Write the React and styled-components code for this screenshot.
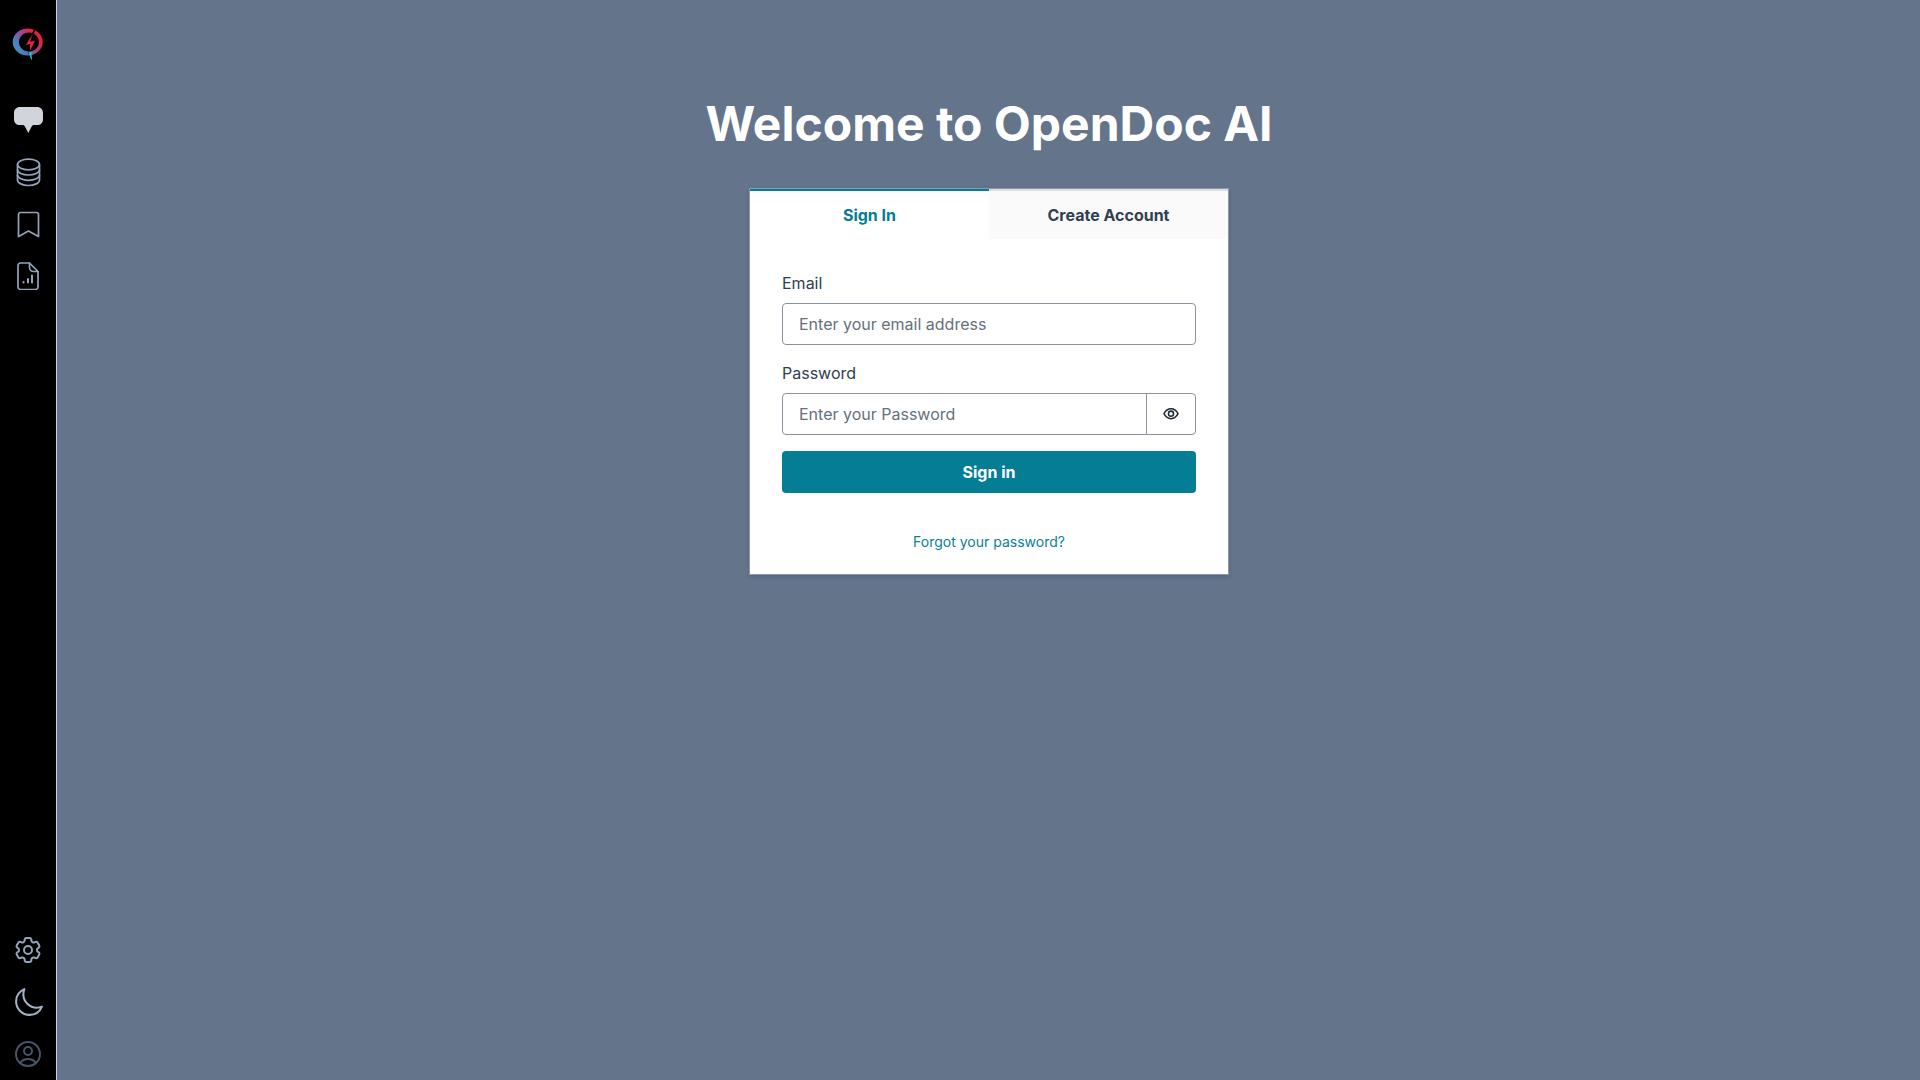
import styled, { createGlobalStyle } from "styled-components";
import { HiOutlineCog6Tooth, HiOutlineMoon, HiOutlineUserCircle } from "react-icons/hi2";

const GlobalStyle = createGlobalStyle`
  html, body {
    margin: 0;
    padding: 0;
    height: 100%;
    font-family: Inter, "Liberation Sans", sans-serif;
    background: #64748b;
  }
  * { box-sizing: border-box; }
`;

const Logo = () => (
  <svg width="34" height="40" viewBox="0 0 34 40" fill="none">
    <defs>
      <linearGradient id="ring" x1="0" y1="0.9" x2="1" y2="0.2">
        <stop offset="0" stopColor="#2aa5c8" />
        <stop offset="0.35" stopColor="#5c6fb8" />
        <stop offset="0.6" stopColor="#b03a80" />
        <stop offset="0.8" stopColor="#e0263f" />
        <stop offset="1" stopColor="#e0262f" />
      </linearGradient>
    </defs>
    <path
      fillRule="evenodd"
      fill="url(#ring)"
      d="M16.7 5.5c8.3 0 15 6 15 13.5s-6.700 13.500-15 13.500-15-6-15-13.500 6.700-13.500 15-13.500zM18 9.500c-5.500 0-10 4.200-10 9.500s4.500 9.500 10 9.500 10-4.200 10-9.500-4.500-9.500-10-9.500z"
    />
    <path d="M23.500 7 L13.500 23 L18.500 21.500 L18 31 L25 17 L20 18 Z" fill="#e8243f" stroke="#000" strokeWidth="1.200" />
    <path d="M18 29 L20.500 36.500 L20 29 Z" fill="#25c7c2" stroke="#25c7c2" strokeWidth="0.700" />
  </svg>
);

const ChatIcon = () => (
  <svg width="29" height="26" viewBox="0 0 29 26">
    <path
      d="M6 0h17c3.500 0 6 2.500 6 6v6.500c0 3.500-2.500 5.500-6 5.500h-3c-1 0-1.500.500-2.200 1.300L14.300 26l-3.500-6.700c-.700-.800-1.200-1.300-2.200-1.300H6c-3.500 0-6-2-6-5.500V6c0-3.500 2.500-6 6-6z"
      fill="#d1d5db"
    />
  </svg>
);

const DatabaseIcon = () => (
  <svg width="25" height="29" viewBox="0 0 25 29" fill="none" stroke="currentColor" strokeWidth="1.700">
    <ellipse cx="12.500" cy="6.500" rx="11" ry="5.300" />
    <path d="M1.500 6.500v15.500c0 3 5 5.500 11 5.500s11-2.500 11-5.500V6.500" />
    <path d="M1.500 11.700c0 3 5 5.300 11 5.300s11-2.300 11-5.300" />
    <path d="M1.500 17c0 3 5 5.300 11 5.300s11-2.300 11-5.300" />
  </svg>
);

const BookmarkIcon = () => (
  <svg width="23" height="27" viewBox="0 0 23 27" fill="none" stroke="currentColor" strokeWidth="1.700" strokeLinejoin="round">
    <path d="M3.500 1.500h16a2 2 0 0 1 2 2v22l-10-5.500-10 5.500v-22a2 2 0 0 1 2-2z" />
  </svg>
);

const ReportIcon = () => (
  <svg width="22" height="28" viewBox="0 0 22 28" fill="none" stroke="currentColor" strokeWidth="1.700" strokeLinecap="round" strokeLinejoin="round">
    <path d="M3.500 1h9L21 9.500V25a2.500 2.500 0 0 1-2.500 2.500h-15A2.500 2.500 0 0 1 1 25V3.500A2.500 2.500 0 0 1 3.500 1z" />
    <path d="M12.500 1v4.500a4 4 0 0 0 4 4H21" />
    <path d="M6.500 20.500v-.5M11 20.500v-3.500M15 20.500v-7" strokeWidth="2" />
  </svg>
);

const EyeIcon = () => (
  <svg width="16" height="16" viewBox="0 0 24 24" fill="none" stroke="#1f2937" strokeWidth="2.300">
    <path d="M1.500 11.500C4 6.500 7.500 4 12 4s8 2.500 10.500 7.500C20 16.500 16.500 19 12 19s-8-2.500-10.500-7.500z" />
    <circle cx="12" cy="11.500" r="3.800" />
  </svg>
);

export default function App() {
  return (
    <>
      <GlobalStyle />
      <Page>
        <Sidebar>
          <NavGroup>
            <LogoSlot>
              <Logo />
            </LogoSlot>
            <NavItem>
              <ChatIcon />
            </NavItem>
            <NavItem>
              <DatabaseIcon />
            </NavItem>
            <NavItem>
              <BookmarkIcon />
            </NavItem>
            <NavItem>
              <ReportIcon />
            </NavItem>
          </NavGroup>
          <NavGroup>
            <NavItem>
              <HiOutlineCog6Tooth size={32} />
            </NavItem>
            <NavItem $soft>
              <HiOutlineMoon size={33} />
            </NavItem>
            <NavItem $dim>
              <HiOutlineUserCircle size={32} />
            </NavItem>
          </NavGroup>
        </Sidebar>
        <Main>
          <Title>Welcome to OpenDoc AI</Title>
          <Card>
            <Tabs>
              <Tab $active>Sign In</Tab>
              <Tab>Create Account</Tab>
            </Tabs>
            <Form onSubmit={(e) => e.preventDefault()}>
              <Field>
                <Label htmlFor="email">Email</Label>
                <Input id="email" type="email" placeholder="Enter your email address" />
              </Field>
              <Field>
                <Label htmlFor="password">Password</Label>
                <InputRow>
                  <PasswordInput id="password" type="password" placeholder="Enter your Password" />
                  <EyeButton type="button" aria-label="Show password">
                    <EyeIcon />
                  </EyeButton>
                </InputRow>
              </Field>
              <SubmitButton type="submit">Sign in</SubmitButton>
            </Form>
            <CardFooter>
              <ForgotLink type="button">Forgot your password?</ForgotLink>
            </CardFooter>
          </Card>
        </Main>
      </Page>
    </>
  );
}

const Page = styled.div`
  display: flex;
  height: 1080px;
  overflow: hidden;
  background: #64748b;
`;

const Sidebar = styled.nav`
  width: 57px;
  flex-shrink: 0;
  background: #000;
  border-right: 1px solid #cbd5e1;
  display: flex;
  flex-direction: column;
  justify-content: space-between;
  padding-top: 17px;
`;

const NavGroup = styled.div`
  display: flex;
  flex-direction: column;
`;

const NavItem = styled.div`
  height: 52px;
  display: flex;
  align-items: center;
  justify-content: center;
  color: ${(props) => (props.$dim ? "#475569" : props.$soft ? "#a3b1c4" : "#94a3b8")};
`;

const LogoSlot = styled(NavItem)`
  margin-bottom: 25px;
`;

const Main = styled.main`
  flex: 1;
  display: flex;
  flex-direction: column;
  align-items: center;
  padding: 95px 0 0 1px;
`;

const Title = styled.h1`
  margin: 0 0 35px;
  font-size: 48px;
  line-height: 58px;
  font-weight: 700;
  color: #fff;
`;

const Card = styled.div`
  width: 480px;
  background: #fff;
  border: 1px solid #8c99ab;
  box-shadow: 0 2px 4px rgba(13, 26, 38, 0.15);
`;

const Tabs = styled.div`
  display: grid;
  grid-template-columns: 1fr 1fr;
`;

const Tab = styled.button`
  height: 50px;
  border: 0;
  border-top: 2px solid ${(props) => (props.$active ? "#047d95" : "#dcdee0")};
  background: ${(props) => (props.$active ? "#fff" : "#fafafa")};
  color: ${(props) => (props.$active ? "#047d95" : "#304050")};
  font-family: inherit;
  font-size: 16px;
  font-weight: 700;
  padding: 0;
`;

const Form = styled.form`
  display: flex;
  flex-direction: column;
  gap: 16px;
  padding: 32px 32px 0;
`;

const Field = styled.div`
  display: flex;
  flex-direction: column;
  gap: 8px;
`;

const Label = styled.label`
  font-size: 16px;
  line-height: 24px;
  color: #304050;
`;

const Input = styled.input`
  height: 42px;
  width: 100%;
  padding: 0 16px;
  border: 1px solid #89949f;
  border-radius: 4px;
  background: #fff;
  font-family: inherit;
  font-size: 16px;
  color: #0d1a26;
  outline: none;

  &::placeholder {
    color: #66717c;
    opacity: 1;
  }
`;

const InputRow = styled.div`
  display: flex;
`;

const PasswordInput = styled(Input)`
  flex: 1;
  border-radius: 4px 0 0 4px;
`;

const EyeButton = styled.button`
  width: 50px;
  height: 42px;
  margin-left: -1px;
  display: flex;
  align-items: center;
  justify-content: center;
  padding: 0;
  background: #fff;
  border: 1px solid #89949f;
  border-radius: 0 4px 4px 0;
`;

const SubmitButton = styled.button`
  height: 42px;
  border: 0;
  border-radius: 4px;
  background: #047d95;
  color: #fff;
  font-family: inherit;
  font-size: 16px;
  font-weight: 700;
`;

const CardFooter = styled.div`
  display: flex;
  justify-content: center;
  padding: 38px 32px 21px;
`;

const ForgotLink = styled.button`
  padding: 0;
  border: 0;
  background: none;
  font-family: inherit;
  font-size: 14px;
  line-height: 22px;
  color: #0a8199;
`;
